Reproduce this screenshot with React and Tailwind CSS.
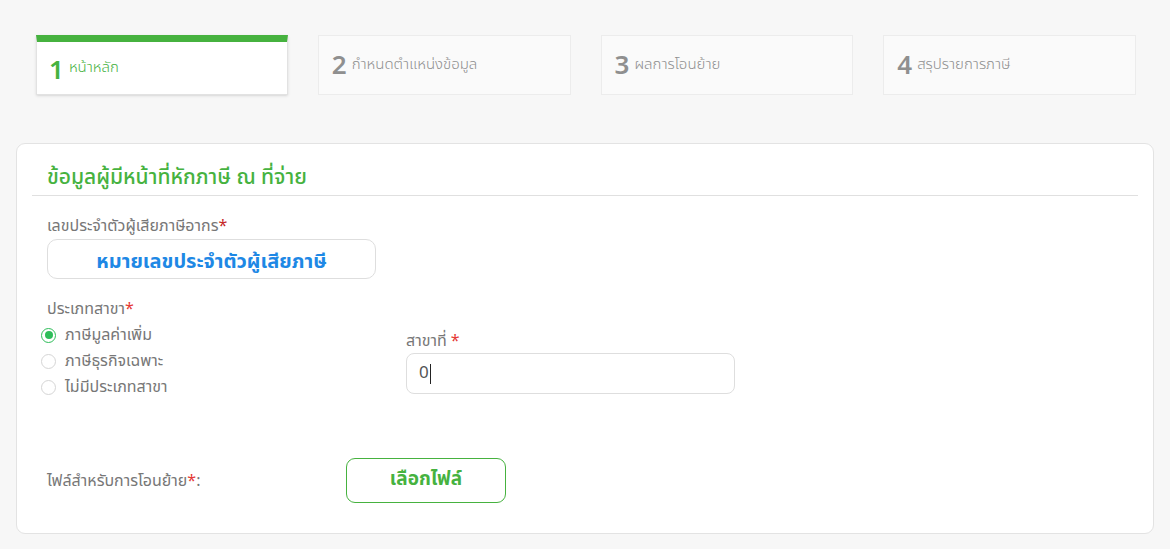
import React, { useState } from "react";

const steps = [
  { no: 1, label: "หน้าหลัก" },
  { no: 2, label: "กำหนดตำแหน่งข้อมูล" },
  { no: 3, label: "ผลการโอนย้าย" },
  { no: 4, label: "สรุปรายการภาษี" },
];

const branchTypes = ["ภาษีมูลค่าเพิ่ม", "ภาษีธุรกิจเฉพาะ", "ไม่มีประเภทสาขา"];

const font = { fontFamily: '"Noto Sans Thai", "Noto Sans", "Liberation Sans", sans-serif' };

const App = () => {
  const [branchType, setBranchType] = useState(0);

  return (
    <div className="min-h-[549px] bg-[#f7f7f7] pt-[35px] px-[16px]" style={font}>
      <div className="flex gap-[30px] pl-[20px] pr-[18px]">
        {steps.map((s, i) => (
          <div
            key={s.no}
            className={
              i === 0
                ? "w-[252px] h-[60px] bg-white border border-[#e2e2e2] border-t-[7px] border-t-[#46b23f] flex items-center pl-[12px] shadow-sm"
                : "w-[253px] h-[60px] bg-[#fafafa] border border-[#ececec] flex items-center pl-[13px]"
            }
          >
            <span
              className={
                i === 0
                  ? "text-[26px] font-semibold text-[#46b23f] leading-none mt-[5px]"
                  : "text-[26px] font-semibold text-[#8f8f8f] leading-none mt-[2px]"
              }
            >
              {s.no}
            </span>
            <span
              className={
                i === 0
                  ? "ml-[5px] text-[15px] font-light text-[#46b23f]"
                  : "ml-[5px] text-[15px] font-light text-[#8f8f8f] mt-[1px]"
              }
            >
              {s.label}
            </span>
          </div>
        ))}
      </div>

      <div className="mt-[48px] bg-white border border-[#e3e3e3] rounded-[9px] h-[391px] px-[15px]">
        <div className="border-b border-[#e0e0e0] h-[52px] flex items-end pb-[2px] pl-[15px]">
          <h2 className="text-[21px] text-[#46b23f] font-medium">ข้อมูลผู้มีหน้าที่หักภาษี ณ ที่จ่าย</h2>
        </div>

        <div className="pl-[15px] pt-[20px]">
          <label className="text-[16px] text-[#777] block leading-[20px]">
            เลขประจำตัวผู้เสียภาษีอากร<span className="text-[#c62828]">*</span>
          </label>
          <button className="mt-[3px] w-[329px] h-[40px] border border-[#dedede] rounded-[10px] bg-white text-[20px] font-bold text-[#1e88e5] pt-[5px] leading-none">
            หมายเลขประจำตัวผู้เสียภาษี
          </button>

          <div className="mt-[20px] flex">
            <div className="w-[359px]">
              <label className="text-[16px] text-[#777] block leading-[20px]">
                ประเภทสาขา<span className="text-[#e53935]">*</span>
              </label>
              <div className="-ml-[6px] mt-[3px] flex flex-col">
                {branchTypes.map((t, i) => (
                  <label
                    key={t}
                    className="flex items-center h-[26px] cursor-pointer"
                    onClick={() => setBranchType(i)}
                  >
                    <span
                      className={
                        branchType === i
                          ? "w-[15px] h-[15px] rounded-full border border-[#2ebd59] flex items-center justify-center"
                          : "w-[15px] h-[15px] rounded-full border border-[#d5d5d5]"
                      }
                    >
                      {branchType === i && <span className="w-[8px] h-[8px] rounded-full bg-[#2ebd59]" />}
                    </span>
                    <span className="ml-[9px] text-[16px] text-[#777]">{t}</span>
                  </label>
                ))}
              </div>
            </div>

            <div className="pt-[32px]">
              <label className="text-[16px] text-[#777] block leading-[20px]">
                สาขาที่ <span className="text-[#e53935]">*</span>
              </label>
              <div className="mt-[2px] w-[329px] h-[41px] border border-[#dedede] rounded-[8px] flex items-center pl-[12px]">
                <span className="text-[17px] text-[#555]">0</span>
                <span className="w-px h-[20px] bg-[#222] ml-[1px]" />
              </div>
            </div>
          </div>

          <div className="mt-[58px] flex items-center">
            <span className="w-[299px] text-[16px] text-[#777]">
              ไฟล์สำหรับการโอนย้าย<span className="text-[#e53935]">*</span>:
            </span>
            <button className="w-[160px] h-[45px] border border-[#46b23f] rounded-[9px] bg-white text-[19px] font-bold text-[#46b23f]">
              เลือกไฟล์
            </button>
          </div>
        </div>
      </div>
    </div>
  );
};

export default App;
